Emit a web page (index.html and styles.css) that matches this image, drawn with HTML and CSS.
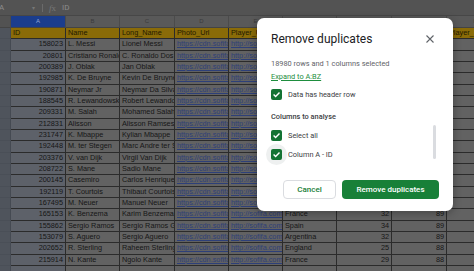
FILE: index.html
```html
<!DOCTYPE html>
<html lang="en">

<head>
    <meta charset="UTF-8">
    <meta name="viewport" content="width=device-width, initial-scale=1.0">
    <title>Remove duplicates</title>
    <link rel="stylesheet" href="styles.css">
</head>

<body>
    <div class="sheet">
        <div class="formulaBar">
            <span class="nameBox">A</span>
            <span class="caret">&#9662;</span>
            <span class="sep"></span>
            <span class="fx"><i>f</i>x</span>
            <span class="formula">ID</span>
        </div>

        <div class="row colHead">
            <div class="cell rh"></div>
            <div class="cell selected">A</div>
            <div class="cell">B</div>
            <div class="cell">C</div>
            <div class="cell">D</div>
            <div class="cell">E</div>
            <div class="cell">F</div>
            <div class="cell">G</div>
            <div class="cell">H</div>
            <div class="cell">I</div>
        </div>

        <div class="row head">
            <div class="cell rh"></div>
            <div class="cell colA">ID</div>
            <div class="cell">Name</div>
            <div class="cell">Long_Name</div>
            <div class="cell">Photo_Url</div>
            <div class="cell">Player_Url</div>
            <div class="cell">Nationality</div>
            <div class="cell">Age</div>
            <div class="cell">Overall</div>
            <div class="cell">Player_Positions</div>
        </div>

        <div id="rows"></div>

        <div class="row">
            <div class="cell rh"></div>
            <div class="cell colA"></div>
            <div class="cell"></div>
            <div class="cell"></div>
            <div class="cell"></div>
            <div class="cell"></div>
            <div class="cell"></div>
            <div class="cell"></div>
            <div class="cell"></div>
            <div class="cell"></div>
        </div>
    </div>

    <div class="dialog">
        <div class="dialogHead">
            <h2>Remove duplicates</h2>
            <button class="close" title="Close">
                <svg width="8" height="8" viewBox="0 0 8 8">
                    <path d="M0.5 0.5 L7.5 7.5 M7.5 0.5 L0.5 7.5" stroke="#5f6368" stroke-width="1.1" fill="none" />
                </svg>
            </button>
        </div>

        <p class="info">18980 rows and 1 columns selected</p>
        <a class="expand" href="#">Expand to A:BZ</a>

        <label class="check headerRow">
            <span class="box"><svg width="11" height="11" viewBox="0 0 11 11"><path d="M2.6 5.6 L4.6 7.6 L8.5 3.5" stroke="#fff" stroke-width="1.4" fill="none" /></svg></span>
            Data has header row
        </label>

        <div class="subTitle">Columns to analyse</div>

        <div class="columnList">
            <div class="items">
                <label class="check">
                    <span class="box"><svg width="11" height="11" viewBox="0 0 11 11"><path d="M2.6 5.6 L4.6 7.6 L8.5 3.5" stroke="#fff" stroke-width="1.4" fill="none" /></svg></span>
                    Select all
                </label>
                <label class="check">
                    <span class="box focused"><svg width="11" height="11" viewBox="0 0 11 11"><path d="M2.6 5.6 L4.6 7.6 L8.5 3.5" stroke="#fff" stroke-width="1.4" fill="none" /></svg></span>
                    Column A - ID
                </label>
            </div>
            <div class="thumb"></div>
        </div>

        <div class="actions">
            <button class="cancel">Cancel</button>
            <button class="primary">Remove duplicates</button>
        </div>
    </div>

    <script>
        var players = [
            ["158023", "L. Messi", "Lionel Messi", "Argentina", 32, 93],
            ["20801", "Cristiano Ronaldo", "C. Ronaldo Dos Santos Aveiro", "Portugal", 34, 92],
            ["200389", "J. Oblak", "Jan Oblak", "Slovenia", 26, 91],
            ["192985", "K. De Bruyne", "Kevin De Bruyne", "Belgium", 28, 91],
            ["190871", "Neymar Jr", "Neymar Da Silva Santos Junior", "Brazil", 27, 91],
            ["188545", "R. Lewandowski", "Robert Lewandowski", "Poland", 31, 90],
            ["209331", "M. Salah", "Mohamed Salah", "Egypt", 27, 90],
            ["212831", "Alisson", "Alisson Ramses Becker", "Brazil", 26, 89],
            ["231747", "K. Mbappe", "Kylian Mbappe", "France", 20, 89],
            ["192448", "M. ter Stegen", "Marc Andre ter Stegen", "Germany", 27, 90],
            ["203376", "V. van Dijk", "Virgil Van Dijk", "Netherlands", 28, 90],
            ["208722", "S. Mane", "Sadio Mane", "Senegal", 27, 90],
            ["200145", "Casemiro", "Carlos Henrique Casimiro", "Brazil", 27, 89],
            ["192119", "T. Courtois", "Thibaut Courtois", "Belgium", 27, 89],
            ["167495", "M. Neuer", "Manuel Neuer", "Germany", 33, 89],
            ["165153", "K. Benzema", "Karim Benzema", "France", 32, 89],
            ["155862", "Sergio Ramos", "Sergio Ramos Garcia", "Spain", 34, 89],
            ["153079", "S. Aguero", "Sergio Aguero", "Argentina", 32, 89],
            ["202652", "R. Sterling", "Raheem Sterling", "England", 25, 88],
            ["215914", "N. Kante", "Ngolo Kante", "France", 29, 88]
        ];

        var html = "";
        for (var i = 0; i < players.length; i++) {
            var p = players[i];
            html += '<div class="row">' +
                '<div class="cell rh"></div>' +
                '<div class="cell colA num">' + p[0] + '</div>' +
                '<div class="cell">' + p[1] + '</div>' +
                '<div class="cell">' + p[2] + '</div>' +
                '<div class="cell link">https://cdn.sofifa.org/players/10/20/' + p[0] + '.png</div>' +
                '<div class="cell link">http://sofifa.com/player/' + p[0] + '</div>' +
                '<div class="cell">' + p[3] + '</div>' +
                '<div class="cell num">' + p[4] + '</div>' +
                '<div class="cell num">' + p[5] + '</div>' +
                '<div class="cell"></div>' +
                '</div>';
        }
        document.getElementById("rows").innerHTML = html;
    </script>
</body>

</html>
```

FILE: styles.css
```css
html,
body {
    height: 100%;
}

body {
    margin: 0;
    overflow: hidden;
    background: #5e5e5e;
    font-family: "Liberation Sans", Arial, sans-serif;
}

/* spreadsheet behind the dialog */

.sheet {
    height: 100%;
    overflow: hidden;
}

.formulaBar {
    height: 15px;
    border-bottom: 1px solid #474747;
    background: #535353;
    display: flex;
    align-items: center;
    font-family: Roboto, sans-serif;
    font-size: 8px;
    color: #8c8c8c;
}

.nameBox {
    width: 33px;
    margin-left: -1px;
}

.caret {
    font-size: 6px;
    color: #777;
}

.sep {
    width: 1px;
    height: 8px;
    background: #6a6a6a;
    margin: 0 6px 0 7px;
}

.fx {
    font-family: "Liberation Serif", serif;
    font-size: 9px;
    width: 13px;
    color: #777;
}

.row {
    display: grid;
    grid-template-columns: 11px 55px 54px 55px 54px 54px 54px 55px 55px 55px;
    height: 11.33px;
}

.cell {
    box-sizing: border-box;
    border-right: 1px solid #2b2b2b;
    border-bottom: 1px solid #2b2b2b;
    padding: 0 2px;
    font-size: 7.3px;
    line-height: 10px;
    white-space: nowrap;
    overflow: hidden;
    color: #161616;
    background: #626262;
}

.cell.rh {
    background: #4f545c;
    border-right-color: #454a52;
    border-bottom-color: #4a4f57;
}

.cell.colA {
    background: #5d6169;
}

.num {
    text-align: right;
}

.link {
    color: #2d3f78;
    text-decoration: underline;
}

.colHead {
    height: 12px;
}

.colHead .cell {
    background: #595959;
    border-right-color: #4b4b4b;
    border-bottom-color: #444;
    text-align: center;
    font-size: 6px;
    line-height: 11px;
    color: #3b3b3b;
}

.colHead .cell.selected {
    background: #1b3d8d;
    color: #93a6d6;
}

.colHead .cell.rh {
    background: #525252;
}

.head .cell {
    background: #8a6b08;
    color: #231a00;
}

.head .cell.rh {
    background: #4f545c;
}

/* dialog */

.dialog {
    position: absolute;
    left: 257px;
    top: 18px;
    width: 196px;
    height: 193px;
    box-sizing: border-box;
    padding: 0 14px;
    background: #fff;
    border-radius: 7px;
    box-shadow: 0 2px 8px rgba(0, 0, 0, 0.3);
    font-family: Roboto, sans-serif;
    display: flex;
    flex-direction: column;
    align-items: flex-start;
}

.dialogHead {
    align-self: stretch;
    display: flex;
    justify-content: space-between;
    align-items: center;
    margin-top: 13px;
    height: 16px;
}

h2 {
    margin: 0;
    font-size: 12px;
    font-weight: 400;
    color: #202124;
}

.close {
    width: 16px;
    height: 16px;
    padding: 0;
    margin-right: 1px;
    border: none;
    background: none;
    display: flex;
    align-items: center;
    justify-content: center;
}

.info {
    margin: 11px 0 0;
    font-size: 7.4px;
    line-height: 12px;
    color: #5f6368;
}

.expand {
    margin-top: 1px;
    font-size: 7.4px;
    line-height: 12px;
    color: #1e8e3e;
}

.check {
    display: flex;
    align-items: center;
    gap: 6px;
    height: 12px;
    font-size: 7.4px;
    color: #3c4043;
}

.headerRow {
    margin-top: 5px;
}

.box {
    position: relative;
    width: 11px;
    height: 11px;
    border-radius: 2px;
    background: #137333;
    display: flex;
}

.box.focused::before {
    content: "";
    position: absolute;
    left: -5px;
    top: -5px;
    width: 21px;
    height: 21px;
    border-radius: 50%;
    background: #eef0f0;
    z-index: -1;
}

.box svg {
    position: relative;
}

.subTitle {
    margin-top: 11px;
    font-size: 7.4px;
    line-height: 12px;
    font-weight: 500;
    color: #3c4043;
}

.columnList {
    align-self: stretch;
    display: flex;
    justify-content: space-between;
    position: relative;
    z-index: 0;
}

.items {
    display: flex;
    flex-direction: column;
    gap: 7px;
    padding-top: 6px;
}

.thumb {
    width: 3px;
    height: 34px;
    margin: 2px 3px 0 0;
    border-radius: 2px;
    background: #dadce0;
}

.actions {
    align-self: stretch;
    display: flex;
    justify-content: flex-end;
    gap: 6px;
    margin-top: 20px;
}

.actions button {
    height: 19px;
    border-radius: 4px;
    font-family: Roboto, sans-serif;
    font-size: 8px;
    font-weight: 500;
    padding: 0;
}

.cancel {
    width: 53px;
    border: 1px solid #dadce0;
    background: #fff;
    color: #188038;
}

.primary {
    width: 97px;
    border: none;
    background: #188038;
    color: #fff;
}
```
